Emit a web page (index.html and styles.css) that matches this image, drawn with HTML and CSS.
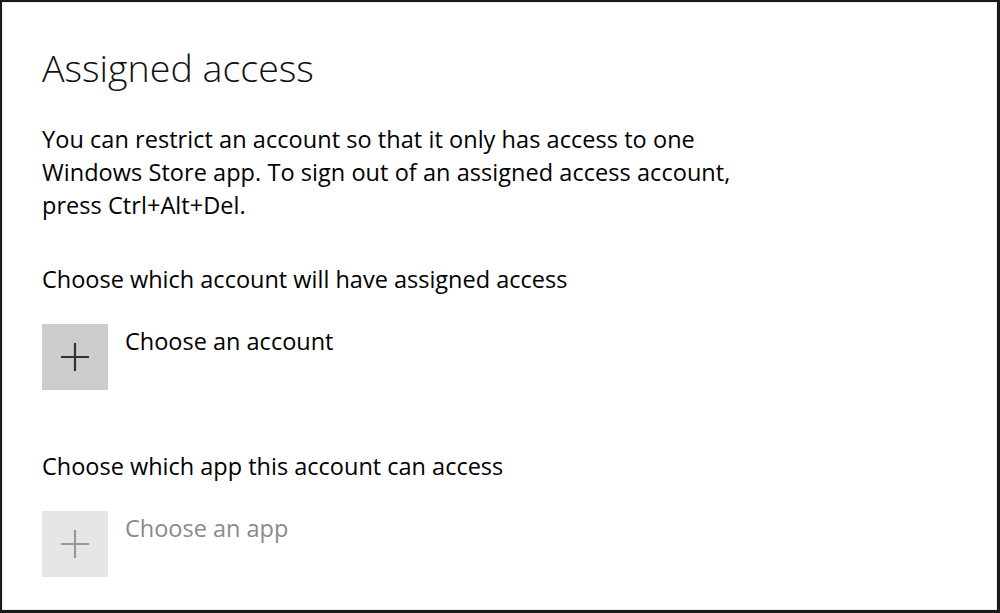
FILE: index.html
```html
<!DOCTYPE html>
<html>
<head>
<meta charset="utf-8">
<link rel="stylesheet" href="styles.css">
</head>
<body>
<div class="frame">
  <div class="panel">
    <h1 class="title">Assigned access</h1>
    <p class="desc">You can restrict an account so that it only has access to one<br>Windows Store app. To sign out of an assigned access account,<br>press Ctrl+Alt+Del.</p>
    <p class="label">Choose which account will have assigned access</p>
    <div class="picker">
      <div class="tile">
        <svg width="30" height="30" viewBox="0 0 30 30"><path d="M15 1V29M1 15H29" stroke="#333" stroke-width="2.2" fill="none"/></svg>
      </div>
      <span class="picker-text">Choose an account</span>
    </div>
    <p class="label label-app">Choose which app this account can access</p>
    <div class="picker disabled">
      <div class="tile">
        <svg width="30" height="30" viewBox="0 0 30 30"><path d="M15 1V29M1 15H29" stroke="#999" stroke-width="2.2" fill="none"/></svg>
      </div>
      <span class="picker-text">Choose an app</span>
    </div>
  </div>
</div>
</body>
</html>
```
FILE: styles.css
```css
html, body {
  margin: 0;
  padding: 0;
  background: #fff;
}
.frame {
  width: 1000px;
  height: 613px;
  box-sizing: border-box;
  border: 2px solid #1a1a1a;
  border-right-width: 3px;
  border-bottom-width: 3px;
  overflow: hidden;
}
.panel {
  height: 100%;
  box-sizing: border-box;
  border: 1px solid #ececec;
  padding: 0 0 0 39px;
  font-family: "Open Sans", "Noto Sans", sans-serif;
  color: #000;
}
.title {
  margin: 0;
  padding-top: 41px;
  font-size: 37.6px;
  font-weight: 300;
  line-height: 48px;
  color: #111;
}
.desc {
  margin: 31px 0 0 0;
  font-size: 23.5px;
  line-height: 33px;
  letter-spacing: 0.05px;
}
.label {
  margin: 41px 0 0 0;
  font-size: 23.5px;
  line-height: 33px;
}
.label-app {
  margin-top: 60px;
}
.picker {
  display: flex;
  align-items: flex-start;
  gap: 17px;
  margin-top: 28px;
}
.tile {
  width: 66px;
  height: 66px;
  background: #cccccc;
  display: flex;
  align-items: center;
  justify-content: center;
  flex: none;
}
.picker-text {
  font-size: 23.5px;
  line-height: 33px;
  margin-top: 1px;
}
.disabled .picker {
  margin-top: 29px;
}
.disabled .tile {
  background: #e6e6e6;
}
.disabled .picker-text {
  color: #8a8a8a;
}
```
